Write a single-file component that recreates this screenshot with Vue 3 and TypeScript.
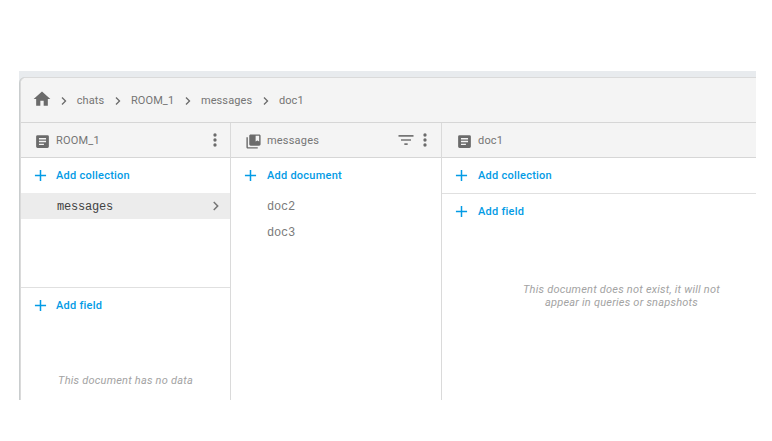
<script setup lang="ts">
const crumbs: string[] = ['chats', 'ROOM_1', 'messages', 'doc1']
const docIcon = 'M19 3H5a2 2 0 0 0-2 2v14a2 2 0 0 0 2 2h14a2 2 0 0 0 2-2V5a2 2 0 0 0-2-2zm-5 14H7v-2h7v2zm3-4H7v-2h10v2zm0-4H7V7h10v2z'
const moreIcon = 'M12 8a2 2 0 1 0 0-4 2 2 0 0 0 0 4zm0 2a2 2 0 1 0 0 4 2 2 0 0 0 0-4zm0 6a2 2 0 1 0 0 4 2 2 0 0 0 0-4z'
const plusIcon = 'M6.200 1h1.600v5.200H13v1.600H7.800V13H6.200V7.800H1V6.200h5.200z'
const chevIcon = 'M9.700 6 8.300 7.400 12.900 12l-4.600 4.600L9.700 18l6-6z'
</script>

<template>
  <div class="page">
    <div class="frame">
      <div class="card">
        <div class="crumbs">
          <svg class="home" viewBox="0 0 24 24" width="20" height="20"><path d="M10 20v-6h4v6h5v-8h3L12 3 2 12h3v8z" /></svg>
          <template v-for="c in crumbs" :key="c">
            <svg class="chev" viewBox="0 0 24 24" width="16" height="16"><path :d="chevIcon" /></svg>
            <span class="crumb">{{ c }}</span>
          </template>
        </div>
        <div class="cols">
          <section class="col first">
            <header class="head">
              <svg class="hicon" viewBox="0 0 24 24" width="17" height="17"><path :d="docIcon" /></svg>
              <span class="title">ROOM_1</span>
              <svg class="more" viewBox="0 0 24 24" width="20" height="20"><path :d="moreIcon" /></svg>
            </header>
            <div class="add"><svg class="plus" viewBox="0 0 14 14" width="13" height="13"><path :d="plusIcon" /></svg>Add collection</div>
            <div class="list tall">
              <div class="item active">messages<svg class="arrow" viewBox="0 0 24 24" width="18" height="18"><path :d="chevIcon" /></svg></div>
            </div>
            <div class="add field"><svg class="plus" viewBox="0 0 14 14" width="13" height="13"><path :d="plusIcon" /></svg>Add field</div>
            <p class="note low">This document has no data</p>
          </section>
          <section class="col">
            <header class="head">
              <svg class="hicon" viewBox="0 0 24 24" width="17" height="17"><path d="M4 6H2v14c0 1.100.9 2 2 2h14v-2H4V6zm16-4H8c-1.100 0-2 .9-2 2v12c0 1.100.9 2 2 2h12c1.100 0 2-.9 2-2V4c0-1.100-.9-2-2-2zm0 10-2.500-1.500L15 12V4h5v8z" /></svg>
              <span class="title">messages</span>
              <svg class="filter" viewBox="0 0 24 24" width="20" height="20"><path d="M10 18h4v-2h-4v2zM3 6v2h18V6H3zm3 7h12v-2H6v2z" /></svg>
              <svg class="more" viewBox="0 0 24 24" width="20" height="20"><path :d="moreIcon" /></svg>
            </header>
            <div class="add"><svg class="plus" viewBox="0 0 14 14" width="13" height="13"><path :d="plusIcon" /></svg>Add document</div>
            <div class="list">
              <div class="item">doc2</div>
              <div class="item">doc3</div>
            </div>
          </section>
          <section class="col last">
            <header class="head">
              <svg class="hicon" viewBox="0 0 24 24" width="17" height="17"><path :d="docIcon" /></svg>
              <span class="title">doc1</span>
            </header>
            <div class="add rule"><svg class="plus" viewBox="0 0 14 14" width="13" height="13"><path :d="plusIcon" /></svg>Add collection</div>
            <div class="add field"><svg class="plus" viewBox="0 0 14 14" width="13" height="13"><path :d="plusIcon" /></svg>Add field</div>
            <p class="note mid">This document does not exist, it will not appear in queries or snapshots</p>
          </section>
        </div>
      </div>
    </div>
  </div>
</template>

<style>
html, body { background: #fff; overflow: hidden; }
</style>

<style scoped>
.page {
  width: 772px;
  height: 441px;
  padding: 71px 16px 41px 19px;
  box-sizing: border-box;
  font-family: Roboto, sans-serif;
  font-size: 11px;
  background: #fff;
}
.frame {
  height: 329px;
  padding-top: 6px;
  box-sizing: border-box;
  background: #e8ebee;
  overflow: hidden;
}
.card {
  height: 100%;
  margin-left: 1px;
  background: #fff;
  border: 1px solid #dadada;
  border-width: 1px 0 0 1px;
  border-top-left-radius: 6px;
  box-shadow: -1px 0 0 #c9cdce;
  display: flex;
  flex-direction: column;
}
.crumbs {
  height: 45px;
  flex: none;
  box-sizing: border-box;
  display: flex;
  align-items: center;
  padding: 1px 0 0 11px;
  background: #f4f4f4;
  border-top-left-radius: 5px;
  border-bottom: 1px solid #d6d6d6;
  color: #757575;
  letter-spacing: 0.1px;
}
.home { fill: #6b6b6b; margin: 0 -2px 4px 0; }
.chev { fill: #6b6b6b; margin: 0 4.500px 0 6.200px; }
.crumb { line-height: 16px; }
.cols { flex: 1; display: flex; min-height: 0; }
.col {
  width: 211px;
  flex: none;
  box-sizing: border-box;
  border-right: 1px solid #dadada;
  display: flex;
  flex-direction: column;
  position: relative;
}
.col.first { width: 210px; }
.col.last { width: 359px; border-right: 0; }
.head {
  height: 35px;
  flex: none;
  box-sizing: border-box;
  display: flex;
  align-items: center;
  padding: 0 6px 0 13.600px;
  background: #f4f4f4;
  border-bottom: 1px solid #d6d6d6;
  color: #757575;
  letter-spacing: 0.2px;
}
.first .head { padding-left: 12.600px; padding-right: 5px; }
.last .head { padding-right: 0; }
.hicon { fill: #6b6b6b; margin: 2px 5.400px 0 0; }
.title { flex: 1; }
.filter { fill: #757575; margin-right: -1px; }
.more { fill: #6b6b6b; }
.add {
  height: 35px;
  flex: none;
  box-sizing: border-box;
  display: flex;
  align-items: center;
  padding: 0 0 1px 13px;
  color: #039be5;
  font-weight: 500;
  letter-spacing: 0.25px;
}
.add.rule { height: 36px; padding-bottom: 0; border-bottom: 1px solid #e0e0e0; }
.add.field { height: 36px; padding-bottom: 2px; }
.plus { fill: #039be5; margin-right: 10px; }
.first .plus { margin-right: 9px; }
.list { flex: none; }
.list.tall { height: 95px; border-bottom: 1px solid #e0e0e0; box-sizing: border-box; }
.item {
  height: 26px;
  box-sizing: border-box;
  display: flex;
  align-items: center;
  padding: 1px 0 0 36px;
  font-family: "Liberation Mono", monospace;
  font-size: 12px;
  letter-spacing: -0.2px;
  color: #7a7a7a;
}
.item.active { background: #ececec; color: #424242; justify-content: space-between; padding-right: 5px; }
.arrow { fill: #757575; margin-top: -1px; }
.note {
  margin: 0;
  font-style: italic;
  text-align: center;
  color: #a3a3a3;
  letter-spacing: 0.22px;
  line-height: 13px;
  position: absolute;
  left: 0;
  right: 0;
}
.note.low { top: 251px; }
.note.mid { top: 160px; padding: 0 72px; }
</style>
